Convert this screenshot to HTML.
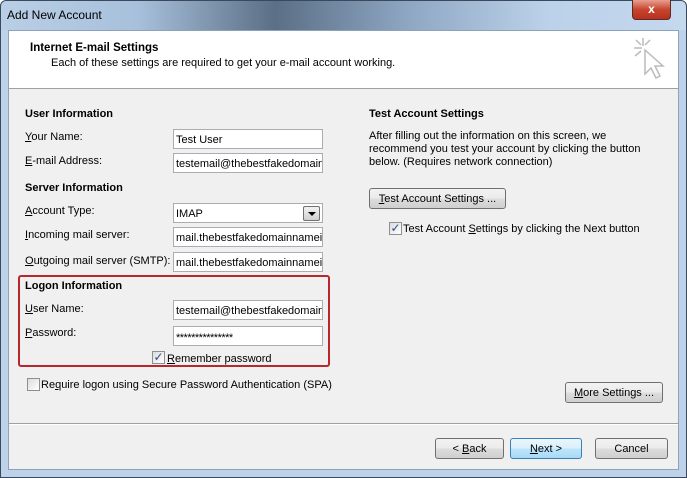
<!DOCTYPE html>
<html><head><meta charset="utf-8"><style>
*{box-sizing:border-box;margin:0;padding:0}
body{width:687px;height:478px;overflow:hidden;font-family:"Liberation Sans",sans-serif;font-size:11px;color:#000;background:#fff}
.frame{position:absolute;left:0;top:0;width:687px;height:478px;background:linear-gradient(90deg,#b9cfe6 0%,#a7c0db 20%,#5b6f86 40%,#8fa8c4 60%,#bcd2ea 80%,#c4d8ee 100%);border:1px solid #3a4a5c;border-radius:6px 6px 0 0}
.frame2{position:absolute;left:0;top:30px;width:687px;height:448px;background:#bed3ea;border:1px solid #3a4a5c;border-top:none}
.client{position:absolute;left:8px;top:30px;width:671px;height:440px;background:#f0f0f0;border:1px solid #8da2bb}
.hdr{position:absolute;left:0;top:0;width:669px;height:58px;background:#fff;border-bottom:1px solid #a0a0a0}
.a{position:absolute;white-space:nowrap}
.b{font-weight:bold}
.inp{position:absolute;background:#fff;border:1px solid #abadb3;height:20px;padding:4px 0 0 2px;overflow:hidden;white-space:nowrap}
.btn{position:absolute;height:21px;border:1px solid #707070;border-radius:3px;background:linear-gradient(#f2f2f2 0%,#ebebeb 50%,#dddddd 51%,#cfcfcf 100%);text-align:center;padding-top:4px;white-space:nowrap}
.cb{position:absolute;width:13px;height:13px;border:1px solid #8e8f8f;background:linear-gradient(135deg,#dcdcdc,#fff)}
u{text-decoration:underline}
</style></head><body>
<div class="frame"></div>
<div class="frame2"></div>
<div class="a" style="left:7px;top:8px;font-size:12px">Add New Account</div>
<div style="position:absolute;left:632px;top:0;width:39px;height:20px;border:1px solid #5a2a25;border-top:none;border-radius:0 0 4px 4px;background:linear-gradient(#e8a08f,#c7452f 50%,#b5311d);color:#fff;font-weight:bold;text-align:center;font-size:12px;line-height:19px">x</div>
<div class="client">
 <div class="hdr">
  <div class="a b" style="left:21px;top:11px;font-size:11.5px">Internet E-mail Settings</div>
  <div class="a" style="left:42px;top:26px">Each of these settings are required to get your e-mail account working.</div>
  <svg style="position:absolute;left:622px;top:5px" width="36" height="48" viewBox="0 0 36 48"><g stroke="#bbb" stroke-width="1.5" fill="none"><path d="M12 2v8M3 12h8M5 4l5 5M19 4l-5 5M4 20l6-5"/><path d="M14 14v24l6-6 5 10 4-2-5-10 8 0z" fill="#fff"/></g></svg>
 </div>
</div>
<div class="a b" style="left:25px;top:108px">User Information</div>
<div class="a" style="left:25px;top:131px"><u>Y</u>our Name:</div>
<div class="inp" style="left:173px;top:129px;width:150px">Test User</div>
<div class="a" style="left:25px;top:155px"><u>E</u>-mail Address:</div>
<div class="inp" style="left:173px;top:153px;width:150px">testemail@thebestfakedomain</div>
<div class="a b" style="left:25px;top:182px">Server Information</div>
<div class="a" style="left:25px;top:205px"><u>A</u>ccount Type:</div>
<div class="inp" style="left:173px;top:203px;width:150px">IMAP</div>
<div style="position:absolute;left:303px;top:206px;width:17px;height:15px;border:1px solid #707070;background:linear-gradient(#f2f2f2,#d0d0d0);border-radius:2px"><div style="position:absolute;left:4px;top:5px;border-left:4px solid transparent;border-right:4px solid transparent;border-top:4px solid #000"></div></div>
<div class="a" style="left:25px;top:229px"><u>I</u>ncoming mail server:</div>
<div class="inp" style="left:173px;top:227px;width:150px">mail.thebestfakedomainnameir</div>
<div class="a" style="left:25px;top:255px"><u>O</u>utgoing mail server (SMTP):</div>
<div class="inp" style="left:173px;top:252px;width:150px">mail.thebestfakedomainnameir</div>
<div style="position:absolute;left:18px;top:275px;width:312px;height:92px;border:2px solid #b8262e;border-radius:3px"></div>
<div class="a b" style="left:25px;top:280px">Logon Information</div>
<div class="a" style="left:25px;top:303px"><u>U</u>ser Name:</div>
<div class="inp" style="left:173px;top:300px;width:150px">testemail@thebestfakedomain</div>
<div class="a" style="left:25px;top:327px"><u>P</u>assword:</div>
<div class="inp" style="left:173px;top:326px;width:150px;font-size:11px;padding-top:5px;letter-spacing:-0.5px">***************</div>
<div class="cb" style="left:152px;top:351px;color:#2a4a8a;font-size:12px;line-height:11px;text-align:center">✓</div>
<div class="a" style="left:167px;top:353px"><u>R</u>emember password</div>
<div class="cb" style="left:27px;top:378px"></div>
<div class="a" style="left:41px;top:379px">Re<u>q</u>uire logon using Secure Password Authentication (SPA)</div>
<div class="a b" style="left:369px;top:108px">Test Account Settings</div>
<div class="a" style="left:369px;top:130px;line-height:13px">After filling out the information on this screen, we<br>recommend you test your account by clicking the button<br>below. (Requires network connection)</div>
<div class="btn" style="left:369px;top:188px;width:137px"><u>T</u>est Account Settings ...</div>
<div class="cb" style="left:389px;top:222px;color:#2a4a8a;font-size:12px;line-height:11px;text-align:center">✓</div>
<div class="a" style="left:403px;top:223px">Test Account <u>S</u>ettings by clicking the Next button</div>
<div class="btn" style="left:565px;top:382px;width:98px"><u>M</u>ore Settings ...</div>
<div style="position:absolute;left:9px;top:423px;width:669px;height:2px;border-top:1px solid #a0a0a0;border-bottom:1px solid #fff"></div>
<div class="btn" style="left:435px;top:438px;width:69px">&lt; <u>B</u>ack</div>
<div class="btn" style="left:510px;top:438px;width:72px;border-color:#3c7fb1;background:linear-gradient(#eaf6fd,#d9f0fc 50%,#bee6fd 51%,#a7d9f5)"><u>N</u>ext &gt;</div>
<div class="btn" style="left:595px;top:438px;width:73px">Cancel</div>
</body></html>
